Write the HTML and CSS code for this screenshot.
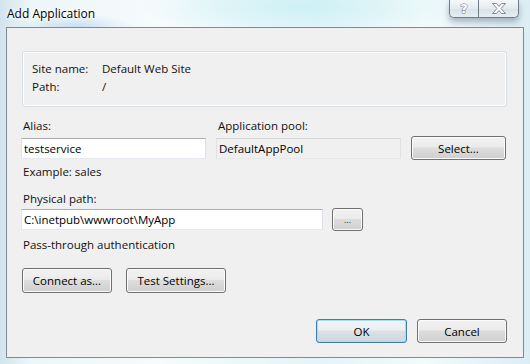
FILE: index.html
```html
<!DOCTYPE html>
<html lang="en">
<head>
    <meta charset="UTF-8">
    <title>Add Application</title>
    <link rel="stylesheet" href="styles.css">
</head>
<body>
    <div class="frame">
        <div class="titlebar">
            <span class="title">Add Application</span>
            <div class="caption-buttons">
                <span class="cap help">?</span>
                <span class="cap close">
                    <svg width="16" height="11" viewBox="0 0 16 11">
                        <path d="M1.5 0.5h4l2.5 3 2.5-3h4l-4.5 5 4.5 5h-4l-2.5-3-2.5 3h-4l4.5-5z" fill="#fff" stroke="#7d8894" stroke-width="1" stroke-linejoin="round"/>
                    </svg>
                </span>
            </div>
        </div>

        <div class="client">
            <div class="groupbox">
                <div class="info-row"><span class="key">Site name:</span><span>Default Web Site</span></div>
                <div class="info-row"><span class="key">Path:</span><span>/</span></div>
            </div>

            <div class="pool-grid">
                <label class="lbl">Alias:</label>
                <label class="lbl">Application pool:</label>
                <span></span>
                <input class="textbox" type="text" value="testservice">
                <input class="textbox readonly" type="text" value="DefaultAppPool" readonly>
                <button class="btn select">Select...</button>
            </div>

            <div class="hint">Example: sales</div>

            <label class="lbl path-label">Physical path:</label>
            <div class="path-row">
                <input class="textbox path" type="text" value="C:\inetpub\wwwroot\MyApp">
                <button class="btn browse">...</button>
            </div>

            <div class="hint auth">Pass-through authentication</div>

            <div class="conn-row">
                <button class="btn connect">Connect as...</button>
                <button class="btn test">Test Settings...</button>
            </div>

            <div class="footer">
                <button class="btn default">OK</button>
                <button class="btn">Cancel</button>
            </div>
        </div>
    </div>
</body>
</html>
```

FILE: styles.css
```css
html, body {
    margin: 0;
    height: 100%;
}
body {
    font-family: "Open Sans", "Noto Sans", sans-serif;
    font-size: 11.5px;
    color: #111;
    overflow: hidden;
}
.frame {
    width: 530px;
    height: 364px;
    box-sizing: border-box;
    padding: 0 6px 6px 6px;
    background:
        radial-gradient(ellipse 60px 14px at 75px 28px, rgba(140, 190, 230, 0.45), transparent),
        radial-gradient(ellipse 160px 30px at 300px 6px, rgba(200, 240, 245, 0.8), transparent),
        linear-gradient(90deg, #d3e4ee 0%, #eef6f9 6%, #f6fbfc 30%, #e4f4f7 60%, #f3fafb 80%, #dcedf4 100%);
}
.titlebar {
    height: 27px;
    display: flex;
    justify-content: space-between;
    align-items: flex-start;
}
.title {
    font-size: 12px;
    padding: 5px 0 0 1px;
    color: #000;
    text-shadow: 0 0 6px #fff, 0 0 3px #fff;
}
.caption-buttons {
    display: flex;
    margin-right: 5px;
    box-shadow: 0 4px 6px rgba(40, 60, 80, 0.35);
    border-radius: 0 0 5px 5px;
}
.cap {
    height: 18px;
    box-sizing: border-box;
    border: 1px solid #6f7b86;
    border-top: none;
    background: linear-gradient(#f4f8fa, #e3ebef 50%, #d7e2e8 51%, #e6eef1);
    display: flex;
    align-items: center;
    justify-content: center;
}
.help {
    width: 29px;
    border-radius: 0 0 0 5px;
    border-right: none;
    font-family: "DejaVu Sans", sans-serif;
    font-weight: bold;
    font-size: 13px;
    line-height: 16px;
    padding-top: 1px;
    color: #fff;
    -webkit-text-stroke: 1px #6b7783;
    paint-order: stroke fill;
}
.close {
    width: 41px;
    border-radius: 0 0 5px 0;
}
.client {
    height: 331px;
    box-sizing: border-box;
    border: 1px solid #7f8a94;
    background: #f0f0f0;
    padding: 23px 16px 0 14px;
}
.groupbox {
    height: 56px;
    box-sizing: border-box;
    margin-left: 1px;
    border: 1px solid #d5dfe5;
    border-radius: 3px;
    box-shadow: inset 0 0 0 1px #fff;
    padding: 8px 0 0 9px;
}
.info-row {
    display: flex;
    line-height: 18px;
}
.key {
    width: 70px;
}
.lbl {
    display: block;
    line-height: 18px;
    padding-left: 2px;
}
.pool-grid {
    margin-top: 10px;
    display: grid;
    grid-template-columns: 185px 185px 95px;
    column-gap: 10px;
    row-gap: 1px;
    align-items: center;
}
.textbox {
    height: 21px;
    box-sizing: border-box;
    margin: 0;
    border: 1px solid;
    border-color: #abadb3 #dbdfe6 #e3e9ef #e2e3ea;
    background: #fff;
    font: inherit;
    color: #000;
    padding: 0 2px;
    outline: none;
}
.textbox.readonly {
    background: #f0f0f0;
    border-color: #d5d5d5 #e2e2e2 #e8e8e8 #e2e2e2;
}
.btn {
    height: 24px;
    box-sizing: border-box;
    margin: 0;
    padding: 0;
    font: inherit;
    color: #000;
    border: 1px solid #707070;
    border-radius: 3px;
    background: linear-gradient(#f2f2f2 0%, #ebebeb 45%, #dddddd 50%, #cfcfcf 100%);
    box-shadow: inset 0 0 0 1px #fbfbfb;
}
.btn.default {
    border-color: #3c7fb1;
    box-shadow: inset 0 0 0 1px #a6dcf6;
    background: linear-gradient(#f2f5f7 0%, #eaf0f3 45%, #dbe2e6 50%, #cfd7dc 100%);
}
.hint {
    margin-top: 3px;
    line-height: 18px;
    padding-left: 2px;
}
.path-label {
    margin-top: 9px;
}
.path-row {
    display: flex;
    align-items: center;
    gap: 9px;
}
.textbox.path {
    width: 302px;
}
.btn.browse {
    width: 31px;
    height: 23px;
    font-size: 9px;
    color: #333;
}
.hint.auth {
    margin-top: 5px;
}
.conn-row {
    display: flex;
    gap: 14px;
    margin: 14px 0 0 1px;
}
.btn.connect {
    width: 90px;
    height: 25px;
}
.btn.test {
    width: 100px;
    height: 25px;
}
.footer {
    display: flex;
    justify-content: flex-end;
    gap: 10px;
    margin-top: 26px;
}
.footer .btn {
    width: 91px;
}
.footer .btn + .btn {
    width: 90px;
}
```
